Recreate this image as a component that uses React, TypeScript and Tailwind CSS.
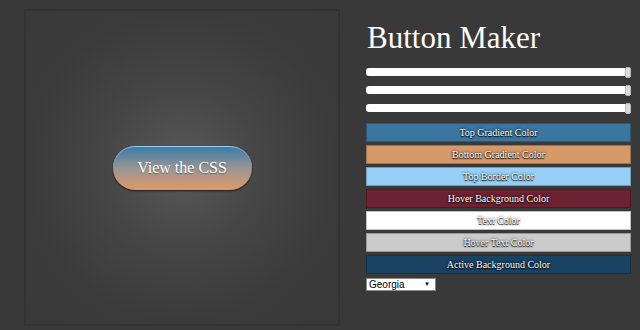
import { useState } from 'react';

const serif = "font-['Liberation_Serif',Georgia,serif]";

const colorButtons = [
  { label: 'Top Gradient Color', bg: 'bg-[#3a76a0]' },
  { label: 'Bottom Gradient Color', bg: 'bg-[#d6996a]' },
  { label: 'Top Border Color', bg: 'bg-[#97d0f7]' },
  { label: 'Hover Background Color', bg: 'bg-[#6d2231]' },
  { label: 'Text Color', bg: 'bg-white' },
  { label: 'Hover Text Color', bg: 'bg-[#cbcbcb]' },
  { label: 'Active Background Color', bg: 'bg-[#1a4262]' },
];

const sliderClass =
  'block w-full h-[18px] appearance-none bg-transparent cursor-pointer ' +
  '[&::-webkit-slider-runnable-track]:h-[8px] [&::-webkit-slider-runnable-track]:rounded-[3px] [&::-webkit-slider-runnable-track]:bg-white ' +
  '[&::-webkit-slider-thumb]:appearance-none [&::-webkit-slider-thumb]:w-[6px] [&::-webkit-slider-thumb]:h-[11px] [&::-webkit-slider-thumb]:mt-[-1.5px] [&::-webkit-slider-thumb]:rounded-[2px] [&::-webkit-slider-thumb]:bg-[#dcdcdc] [&::-webkit-slider-thumb]:border [&::-webkit-slider-thumb]:border-[#bbbbbb]';

export default function App() {
  const [sliders, setSliders] = useState([100, 100, 100]);
  const [font, setFont] = useState('Georgia');

  return (
    <div className="min-h-screen bg-[#393939] flex items-start pl-[24px] pt-[9px]">
      {/* Preview */}
      <div className="w-[316px] h-[317px] shrink-0 border-2 border-[#323232] bg-[radial-gradient(circle_at_center,#5a5a5a_0%,#464646_35%,#3b3b3b_70%,#393939_100%)] flex items-center justify-center">
        <button
          className={`${serif} w-[139px] h-[44px] rounded-full border-t border-[#96d1f8] bg-[linear-gradient(to_bottom,#3d7ca6_0%,#9a9595_50%,#df9a65_100%)] text-white text-[16px] shadow-[0_1px_2px_rgba(0,0,0,0.7)] [text-shadow:0_1px_1px_rgba(0,0,0,0.4)]`}
        >
          View the CSS
        </button>
      </div>

      {/* Controls */}
      <div className="ml-[26px] w-[265px] pt-[13px]">
        <h1 className={`${serif} text-[31px] leading-none text-white pl-[1px]`}>Button Maker</h1>

        <div className="mt-[10px]">
          {sliders.map((v, i) => (
            <input
              key={i}
              type="range"
              min={0}
              max={100}
              value={v}
              onChange={(e) => {
                const next = [...sliders];
                next[i] = Number(e.target.value);
                setSliders(next);
              }}
              className={sliderClass}
            />
          ))}
        </div>

        <div className="mt-[6px] flex flex-col gap-[3px]">
          {colorButtons.map((b) => (
            <button
              key={b.label}
              className={`${serif} ${b.bg} h-[19px] w-full border border-black/25 text-white text-[10px] leading-none [text-shadow:0_0_3px_#000,0_1px_1px_#000]`}
            >
              {b.label}
            </button>
          ))}
        </div>

        <div className="relative mt-[4px] w-[70px] h-[13px]">
          <select
            value={font}
            onChange={(e) => setFont(e.target.value)}
            className="block appearance-none w-full h-[13px] bg-white border border-[#8a8a8a] text-black text-[10px] leading-none py-0 pl-[2px] font-['Liberation_Sans',Arial,sans-serif] outline-none"
          >
            <option>Georgia</option>
            <option>Arial</option>
            <option>Verdana</option>
          </select>
          <span className="pointer-events-none absolute right-[6px] top-[2px] text-[6px] leading-[9px] text-black">▼</span>
        </div>
      </div>
    </div>
  );
}
